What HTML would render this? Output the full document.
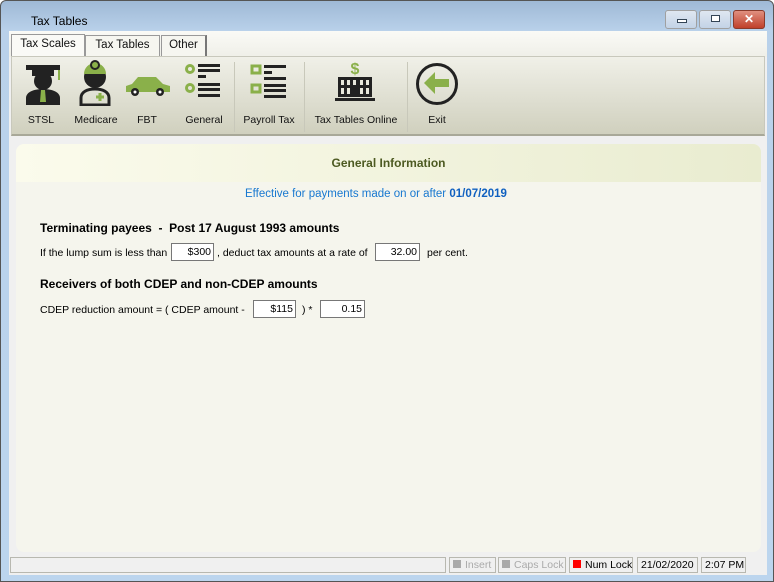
<!DOCTYPE html>
<html><head><meta charset="utf-8"><style>
*{margin:0;padding:0;box-sizing:border-box}
body{width:774px;height:582px;overflow:hidden;font-family:"Liberation Sans",sans-serif;font-size:11px;background:#fff}
.win{position:absolute;left:0;top:0;width:774px;height:582px;background:linear-gradient(#9fb9d6,#b9d1ea 30px,#bcd5ee);border:1px solid #555;border-radius:6px 6px 0 0}
.title{position:absolute;left:30px;top:13px;font-size:12px;color:#000}
.client{position:absolute;left:8px;top:30px;width:758px;height:544px;background:#f0f0f0}
.tb{position:absolute;top:9px;height:19px;border:1px solid #a0a0a0;border-radius:3px;background:linear-gradient(#dfe7f1,#c3d3e6)}
.tabs{position:absolute;left:0;top:0;width:758px;height:26px;background:linear-gradient(#fafaf6,#efefe8)}
.tab{position:absolute;top:4px;height:21px;border:1px solid #999;border-bottom:none;background:#f6f6f0;font-size:11.5px;padding:3px 0 0;text-align:center;color:#111}
.toolbar{position:absolute;left:2px;top:25px;width:754px;height:80px;background:linear-gradient(#f0f0e8,#d0d0be);border:1px solid #c8c8bc;border-bottom:2px solid #a8a898}
.btn{position:absolute;top:57px;font-size:10.5px;color:#111;text-align:center;white-space:nowrap}
.sep{position:absolute;top:5px;width:1px;height:70px;background:#c8c8ba}
.panel{position:absolute;left:7px;top:113px;width:745px;height:408px;background:#f5f5ed;border-radius:8px}
.head{position:absolute;left:0;top:0;width:745px;height:38px;background:linear-gradient(90deg,#fbfbec,#e9ecd0);border-radius:8px 8px 0 0;font-weight:bold;font-size:12px;color:#4d5a22;text-align:center;padding-top:12px}
.t{position:absolute;white-space:nowrap;font-size:10.5px}
.b{font-weight:bold;font-size:12px}
.box{position:absolute;height:18px;border:1px solid #777;background:#fff;text-align:right;padding:2px 2px 0 0;font-size:10.5px}
.sb{position:absolute;top:526px;height:16px;border:1px solid #b8b8b0;font-size:10.5px;padding:1px 3px 0;white-space:nowrap}
.sq{display:inline-block;width:8px;height:8px;margin-right:4px}
</style></head><body>
<div class="win">
<div class="title">Tax Tables</div>
<div class="tb" style="left:664px;width:32px"><div style="position:absolute;left:11px;top:8px;width:10px;height:4px;border:1px solid #345;background:#fff"></div></div>
<div class="tb" style="left:698px;width:32px"><div style="position:absolute;left:11px;top:4px;width:9px;height:7px;border:1px solid #345;background:#fff"></div></div>
<div class="tb" style="left:732px;width:32px;background:linear-gradient(#e09080,#c0402a);border-color:#8a3a2a;color:#fff;font-weight:bold;text-align:center;font-size:12px;line-height:17px">✕</div>
<div class="client">
<div class="tabs">
<div class="tab" style="left:2px;width:74px;top:3px;height:23px;background:#fafaf6">Tax Scales</div>
<div class="tab" style="left:76px;width:75px">Tax Tables</div>
<div class="tab" style="left:152px;width:46px;border-right:2px solid #777">Other</div>
</div>
<div class="toolbar">
<svg style="position:absolute;left:12px;top:4px" width="40" height="44" viewBox="0 0 40 44"><path d="M2 4h34v5H2z" fill="#222"/><path d="M8 9h22v6H8z" fill="#222"/><rect x="34" y="9" width="2" height="10" fill="#8ab04a"/><circle cx="19" cy="20" r="9" fill="#222"/><path d="M2 44v-7c0-6 8-9 17-9s17 3 17 9v7z" fill="#222"/><path d="M17 29h4l1 12h-6z" fill="#8ab04a"/></svg>
<div class="btn" style="left:12px;width:34px">STSL</div>
<svg style="position:absolute;left:66px;top:3px" width="34" height="46" viewBox="0 0 34 46"><circle cx="17" cy="17" r="11" fill="#222"/><path d="M6 14a11 11 0 0 1 22 0z" fill="#8ab04a"/><circle cx="17" cy="5" r="4" fill="#8ab04a" stroke="#222" stroke-width="2"/><path d="M3 45v-7c0-6 6-9 14-9s14 3 14 9v7z" fill="none" stroke="#222" stroke-width="3"/><path d="M22 33v8M18 37h8" stroke="#8ab04a" stroke-width="3"/></svg>
<div class="btn" style="left:60px;width:48px">Medicare</div>
<svg style="position:absolute;left:113px;top:17px" width="46" height="24" viewBox="0 0 46 24"><path d="M1 18v-6l6-2 6-7h18l7 7 7 2v6z" fill="#8ab04a"/><circle cx="10" cy="18" r="4" fill="#222"/><circle cx="35" cy="18" r="4" fill="#222"/><circle cx="10" cy="18" r="1.5" fill="#fff"/><circle cx="35" cy="18" r="1.5" fill="#fff"/></svg>
<div class="btn" style="left:120px;width:30px">FBT</div>
<svg style="position:absolute;left:172px;top:6px" width="38" height="38" viewBox="0 0 38 38"><g fill="none" stroke="#8ab04a" stroke-width="3"><circle cx="6" cy="6" r="3.5"/><circle cx="6" cy="25" r="3.5"/></g><g fill="#222"><rect x="14" y="1" width="22" height="3"/><rect x="14" y="6" width="22" height="3"/><rect x="14" y="12" width="8" height="3"/><rect x="14" y="20" width="22" height="3"/><rect x="14" y="25" width="22" height="3"/><rect x="14" y="31" width="22" height="3"/></g></svg>
<div class="btn" style="left:172px;width:40px">General</div>
<div class="sep" style="left:222px"></div>
<svg style="position:absolute;left:238px;top:6px" width="38" height="38" viewBox="0 0 38 38"><g fill="none" stroke="#8ab04a" stroke-width="3"><rect x="2" y="3" width="8" height="7"/><rect x="2" y="22" width="8" height="7"/></g><g fill="#222"><rect x="14" y="2" width="22" height="3"/><rect x="14" y="8" width="8" height="3"/><rect x="14" y="14" width="22" height="3"/><rect x="14" y="21" width="22" height="3"/><rect x="14" y="26" width="22" height="3"/><rect x="14" y="32" width="22" height="3"/></g></svg>
<div class="btn" style="left:228px;width:58px">Payroll Tax</div>
<div class="sep" style="left:292px"></div>
<svg style="position:absolute;left:322px;top:3px" width="42" height="42" viewBox="0 0 42 42"><text x="21" y="14" font-size="16" font-weight="bold" fill="#8ab04a" text-anchor="middle" font-family="Liberation Sans">$</text><path d="M4 17h34v20H4z" fill="#222"/><g fill="#e8e8dc"><rect x="7" y="20" width="3" height="5"/><rect x="13" y="20" width="3" height="5"/><rect x="19" y="20" width="3" height="5"/><rect x="26" y="20" width="3" height="5"/><rect x="32" y="20" width="3" height="5"/><rect x="7" y="28" width="3" height="6"/><rect x="13" y="28" width="3" height="6"/><rect x="26" y="28" width="3" height="6"/><rect x="32" y="28" width="3" height="6"/></g><rect x="1" y="38" width="40" height="3" fill="#222"/></svg>
<div class="btn" style="left:298px;width:92px">Tax Tables Online</div>
<div class="sep" style="left:395px"></div>
<svg style="position:absolute;left:403px;top:5px" width="44" height="44" viewBox="0 0 44 44"><circle cx="22" cy="22" r="19.5" fill="none" stroke="#222" stroke-width="3"/><path d="M20 10L9 21l11 11v-7h14v-8H20z" fill="#8ab04a"/></svg>
<div class="btn" style="left:410px;width:30px">Exit</div>
</div>
<div class="panel">
<div class="head">General Information</div>
<div class="t" style="left:229px;top:44px;font-size:11.5px;color:#1878d0">Effective for payments made on or after <b style="color:#1060c0">01/07/2019</b></div>
<div class="t b" style="left:24px;top:77px">Terminating payees&nbsp; -&nbsp; Post 17 August 1993 amounts</div>
<div class="t" style="left:24px;top:103px">If the lump sum is less than</div>
<div class="box" style="left:155px;top:99px;width:43px">$300</div>
<div class="t" style="left:201px;top:103px">, deduct tax amounts at a rate of</div>
<div class="box" style="left:359px;top:99px;width:45px">32.00</div>
<div class="t" style="left:411px;top:103px">per cent.</div>
<div class="t b" style="left:24px;top:133px">Receivers of both CDEP and non-CDEP amounts</div>
<div class="t" style="left:24px;top:160px">CDEP reduction amount = ( CDEP amount -</div>
<div class="box" style="left:237px;top:156px;width:43px">$115</div>
<div class="t" style="left:286px;top:160px">) *</div>
<div class="box" style="left:304px;top:156px;width:45px">0.15</div>
</div>
<div class="sb" style="left:1px;width:436px"></div>
<div class="sb" style="left:440px;width:47px;color:#aaa"><span class="sq" style="background:#aaa"></span>Insert</div>
<div class="sb" style="left:489px;width:68px;color:#aaa"><span class="sq" style="background:#aaa"></span>Caps Lock</div>
<div class="sb" style="left:560px;width:64px"><span class="sq" style="background:#f00"></span>Num Lock</div>
<div class="sb" style="left:628px;width:61px">21/02/2020</div>
<div class="sb" style="left:692px;width:45px">2:07 PM</div>
</div>
</div>
</body></html>
